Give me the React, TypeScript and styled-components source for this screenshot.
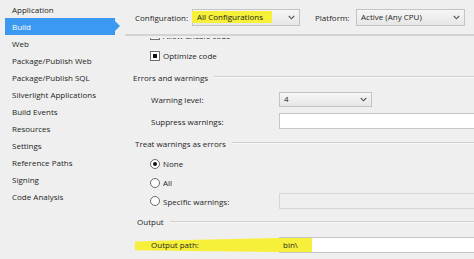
import React from 'react';
import styled, {createGlobalStyle, css} from 'styled-components';

const GlobalStyle = createGlobalStyle`
  html, body {
    margin: 0;
    padding: 0;
    background: #efefef;
  }
  body {
    font-family: "Open Sans", "Noto Sans", sans-serif;
    font-size: 8px;
    color: #1e1e1e;
  }
`;

const MARKER = '#f6f03a';

const Page = styled.div`
  display: flex;
  width: 474px;
  height: 259px;
  overflow: hidden;
  background: #efefef;
`;

const Sidebar = styled.nav`
  width: 125px;
  flex-shrink: 0;
  padding-top: 1px;
  display: flex;
  flex-direction: column;
`;

const NavItem = styled.div<{ $active?: boolean }>`
  position: relative;
  height: 17px;
  line-height: 17px;
  padding-left: 12px;
  margin-right: 10px;
  white-space: nowrap;
  ${p => p.$active && css`
    background: #3c99f2;
    color: #fff;
    margin-left: 5px;
    padding-left: 7px;
    &::after {
      content: '';
      position: absolute;
      right: -5px;
      top: 3px;
      border-left: 5px solid #3c99f2;
      border-top: 5.5px solid transparent;
      border-bottom: 5.5px solid transparent;
    }
  `}
`;

const Main = styled.main`
  flex: 1;
  display: flex;
  flex-direction: column;
  min-width: 0;
`;

const Header = styled.header`
  height: 34px;
  flex-shrink: 0;
  display: flex;
  align-items: center;
  padding-left: 10px;
  border-bottom: 2px solid #d3d3d3;
`;

const HeaderLabel = styled.span<{ $w: number }>`
  width: ${p => p.$w}px;
  flex-shrink: 0;
`;

const Combo = styled.div<{ $w: number; $h?: number; $gapAfter?: number }>`
  width: ${p => p.$w}px;
  height: ${p => p.$h ?? 17}px;
  box-sizing: border-box;
  flex-shrink: 0;
  display: flex;
  align-items: center;
  justify-content: space-between;
  border: 1px solid #c4c4c4;
  background: linear-gradient(#f6f6f6, #e6e6e6);
  padding-right: 4px;
  margin-right: ${p => p.$gapAfter ?? 0}px;
`;

const ComboValue = styled.span<{ $marked?: boolean }>`
  padding: 0 4px;
  line-height: 12px;
  ${p => p.$marked && css`
    background: ${MARKER};
    padding: 0 9px 0 5px;
    margin-left: -1px;
  `}
`;

const Chevron = () => (
  <svg width="7" height="5" viewBox="0 0 7 5">
    <polyline points="0.8,1 3.5,3.8 6.2,1" fill="none" stroke="#555" strokeWidth="1.1"/>
  </svg>
);

const Content = styled.section`
  flex: 1;
  overflow: hidden;
  margin-top: 2px;
`;

const Scroll = styled.div`
  margin-top: -13px;
  display: flex;
  flex-direction: column;
`;

const CheckRow = styled.div<{ $h?: number }>`
  height: ${p => p.$h ?? 19}px;
  display: flex;
  align-items: center;
  padding-left: 25px;
`;

const Choice = styled.span<{ $w?: number }>`
  display: flex;
  align-items: center;
  gap: 3px;
  white-space: nowrap;
  flex-shrink: 0;
  ${p => p.$w && css`width: ${p.$w}px;`}
`;

const CheckBox = styled.span<{ $checked?: boolean }>`
  width: 10px;
  height: 10px;
  box-sizing: border-box;
  border: 1px solid #707070;
  background: #fff;
  display: flex;
  align-items: center;
  justify-content: center;
  &::after {
    content: '';
    width: 4px;
    height: 4px;
    background: ${p => p.$checked ? '#111' : 'transparent'};
  }
`;

const Radio = styled.span<{ $checked?: boolean }>`
  width: 10px;
  height: 10px;
  box-sizing: border-box;
  border: 1px solid #6a6a6a;
  border-radius: 50%;
  background: #fff;
  display: flex;
  align-items: center;
  justify-content: center;
  &::after {
    content: '';
    width: 4px;
    height: 4px;
    border-radius: 50%;
    background: ${p => p.$checked ? '#111' : 'transparent'};
  }
`;

const GroupHeader = styled.div<{ $pad?: number; $h?: number }>`
  height: ${p => p.$h ?? 22}px;
  display: flex;
  align-items: center;
  gap: 6px;
  padding-left: ${p => p.$pad ?? 8}px;
  &::after {
    content: '';
    flex: 1;
    height: 1px;
    background: #cfcfcf;
    border-bottom: 1px solid #f8f8f8;
  }
`;

const FieldRow = styled.div<{ $h?: number }>`
  height: ${p => p.$h ?? 22}px;
  display: flex;
  align-items: center;
  padding-left: 26px;
`;

const FieldLabel = styled.span<{ $marked?: boolean }>`
  width: 128px;
  flex-shrink: 0;
  ${p => p.$marked && css`
    margin-left: -16px;
    padding-left: 16px;
    height: 14px;
    line-height: 14px;
    background: ${MARKER};
    clip-path: polygon(0 25%, 35% 15%, 100% 0, 100% 100%, 40% 92%, 0 88%);
  `}
`;

const TextBox = styled.div<{ $disabled?: boolean }>`
  width: 220px;
  height: 16px;
  box-sizing: border-box;
  flex-shrink: 0;
  border: 1px solid ${p => p.$disabled ? '#d6d6d6' : '#c6c6c6'};
  background: ${p => p.$disabled ? '#efefef' : '#fff'};
  display: flex;
  align-items: stretch;
`;

const TextValue = styled.span<{ $marked?: boolean }>`
  padding: 0 3px;
  line-height: 14px;
  ${p => p.$marked && css`
    background: ${MARKER};
    margin-left: -1px;
    padding: 0 14px 0 4px;
  `}
`;

const navItems = [
  'Application',
  'Build',
  'Web',
  'Package/Publish Web',
  'Package/Publish SQL',
  'Silverlight Applications',
  'Build Events',
  'Resources',
  'Settings',
  'Reference Paths',
  'Signing',
  'Code Analysis',
];

export default function App() {
  return (
    <>
      <GlobalStyle/>
      <Page>
        <Sidebar>
          {navItems.map(n => (
            <NavItem key={n} $active={n === 'Build'}>{n}</NavItem>
          ))}
        </Sidebar>
        <Main>
          <Header>
            <HeaderLabel $w={57}>Configuration:</HeaderLabel>
            <Combo $w={108} $gapAfter={15}>
              <ComboValue $marked>All Configurations</ComboValue>
              <Chevron/>
            </Combo>
            <HeaderLabel $w={41}>Platform:</HeaderLabel>
            <Combo $w={109}>
              <ComboValue>Active (Any CPU)</ComboValue>
              <Chevron/>
            </Combo>
          </Header>
          <Content>
            <Scroll>
              <CheckRow $h={20}>
                <Choice><CheckBox/>Allow unsafe code</Choice>
              </CheckRow>
              <CheckRow $h={21}>
                <Choice><CheckBox $checked/>Optimize code</Choice>
              </CheckRow>
              <GroupHeader>Errors and warnings</GroupHeader>
              <FieldRow>
                <FieldLabel>Warning level:</FieldLabel>
                <Combo $w={93} $h={15}>
                  <ComboValue>4</ComboValue>
                  <Chevron/>
                </Combo>
              </FieldRow>
              <FieldRow>
                <FieldLabel>Suppress warnings:</FieldLabel>
                <TextBox/>
              </FieldRow>
              <GroupHeader $pad={10}>Treat warnings as errors</GroupHeader>
              <CheckRow>
                <Choice><Radio $checked/>None</Choice>
              </CheckRow>
              <CheckRow>
                <Choice><Radio/>All</Choice>
              </CheckRow>
              <CheckRow $h={18}>
                <Choice $w={129}><Radio/>Specific warnings:</Choice>
                <TextBox $disabled/>
              </CheckRow>
              <GroupHeader $pad={12} $h={23}>Output</GroupHeader>
              <FieldRow $h={24}>
                <FieldLabel $marked>Output path:</FieldLabel>
                <TextBox>
                  <TextValue $marked>bin\</TextValue>
                </TextBox>
              </FieldRow>
            </Scroll>
          </Content>
        </Main>
      </Page>
    </>
  );
}
